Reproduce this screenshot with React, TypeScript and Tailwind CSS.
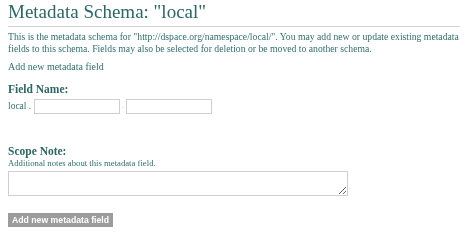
export default function App() {
  return (
    <div className="w-[474px] h-[240px] bg-white px-2 overflow-hidden text-[#336e6e] font-['Liberation_Serif','Times_New_Roman',serif]">
      <h1 className="pt-[1px] text-[19px] leading-[22px] text-[#2c6666]">Metadata Schema: "local"</h1>
      <div className="mt-[3px] w-[452px] border-t border-[#d4d4d4]" />
      <p className="mt-[4px] text-[9.7px] leading-[12px]">
        This is the metadata schema for "http://dspace.org/namespace/local/". You may add new or update existing
        metadata fields to this schema. Fields may also be selected for deletion or be moved to another schema.
      </p>
      <p className="mt-[6px] text-[10px] leading-[12px]">Add new metadata field</p>

      <h2 className="mt-[9px] text-[11.5px] leading-[14px] font-bold text-[#2c6666]">Field Name:</h2>
      <div className="mt-[3px] flex h-[15px] items-center text-[9.5px]">
        <span>local .</span>
        <input className="ml-[3px] h-[15px] w-[86px] border border-[#cfcfcf] bg-white" />
        <span className="mx-[2px] text-[7px] text-[#aaa]">.</span>
        <input className="h-[15px] w-[86px] border border-[#cfcfcf] bg-white" />
      </div>

      <h2 className="mt-[30px] text-[11.5px] leading-[14px] font-bold text-[#2c6666]">Scope Note:</h2>
      <p className="text-[8.7px] leading-[10px]">Additional notes about this metadata field.</p>
      <textarea className="mt-[3px] block h-[25px] w-[340px] resize border border-[#cfcfcf] bg-white" />
      <button className="mt-[17px] block h-[14px] bg-[#9c9c9c] px-[4px] font-['Liberation_Sans',Arial,sans-serif] text-[8.7px] font-bold leading-[14px] text-white">
        Add new metadata field
      </button>
    </div>
  );
}
